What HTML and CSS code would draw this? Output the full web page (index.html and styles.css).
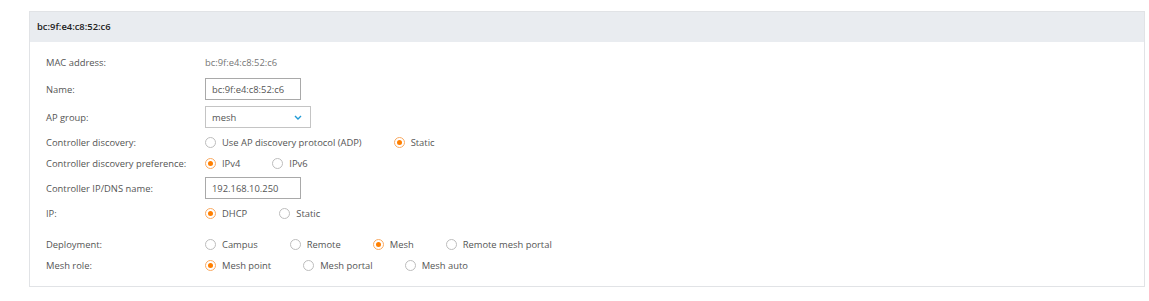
FILE: index.html
```html
<!DOCTYPE html>
<html lang="en">
<head>
  <meta charset="UTF-8" />
  <title>AP details</title>
  <link rel="stylesheet" href="styles.css">
</head>
<body>

<div class="ap-panel">
  <div class="ap-panel-header">bc:9f:e4:c8:52:c6</div>

  <div class="ap-panel-body">
    <div class="field-row">
      <div class="field-label">MAC address:</div>
      <div class="field-value static-value">bc:9f:e4:c8:52:c6</div>
    </div>

    <div class="field-row input-row first-input">
      <div class="field-label">Name:</div>
      <div class="field-value"><input class="text-input" type="text" value="bc:9f:e4:c8:52:c6" /></div>
    </div>

    <div class="field-row input-row tight">
      <div class="field-label">AP group:</div>
      <div class="field-value">
        <div class="select-box">
          <span>mesh</span>
          <svg class="chevron" width="8" height="5" viewBox="0 0 8 5"><path d="M1 1 L4 4 L7 1" fill="none" stroke="#1f9ad6" stroke-width="1.4"/></svg>
        </div>
      </div>
    </div>

    <div class="field-row">
      <div class="field-label">Controller discovery:</div>
      <div class="field-value radio-group">
        <label class="radio"><span class="radio-dot"></span>Use AP discovery protocol (ADP)</label>
        <label class="radio checked"><span class="radio-dot"></span>Static</label>
      </div>
    </div>

    <div class="field-row">
      <div class="field-label">Controller discovery preference:</div>
      <div class="field-value radio-group">
        <label class="radio checked"><span class="radio-dot"></span>IPv4</label>
        <label class="radio"><span class="radio-dot"></span>IPv6</label>
      </div>
    </div>

    <div class="field-row input-row">
      <div class="field-label">Controller IP/DNS name:</div>
      <div class="field-value"><input class="text-input" type="text" value="192.168.10.250" /></div>
    </div>

    <div class="field-row">
      <div class="field-label">IP:</div>
      <div class="field-value radio-group">
        <label class="radio checked"><span class="radio-dot"></span>DHCP</label>
        <label class="radio"><span class="radio-dot"></span>Static</label>
      </div>
    </div>

    <div class="field-row group-start">
      <div class="field-label">Deployment:</div>
      <div class="field-value radio-group">
        <label class="radio"><span class="radio-dot"></span>Campus</label>
        <label class="radio"><span class="radio-dot"></span>Remote</label>
        <label class="radio checked"><span class="radio-dot"></span>Mesh</label>
        <label class="radio"><span class="radio-dot"></span>Remote mesh portal</label>
      </div>
    </div>

    <div class="field-row">
      <div class="field-label">Mesh role:</div>
      <div class="field-value radio-group">
        <label class="radio checked"><span class="radio-dot"></span>Mesh point</label>
        <label class="radio"><span class="radio-dot"></span>Mesh portal</label>
        <label class="radio"><span class="radio-dot"></span>Mesh auto</label>
      </div>
    </div>
  </div>
</div>

</body>
</html>
```

FILE: styles.css
```css
body {
  font-family: 'Open Sans', sans-serif;
  font-size: 9.4px;
  margin: 0;
  padding: 11px 4px 0 29px;
  background-color: #fff;
  color: #555;
}

.ap-panel {
  border: 1px solid #e1e3e6;
  background-color: #fff;
}

.ap-panel-header {
  height: 30px;
  line-height: 30px;
  padding-left: 7px;
  background-color: #e9ecf0;
  color: #222;
  font-weight: 600;
}

.ap-panel-body {
  padding: 10px 16px 11px 16px;
}

.field-row {
  display: flex;
  align-items: center;
  height: 20px;
  margin-top: 1px;
}

.field-row:first-child {
  margin-top: 0;
}

.input-row {
  height: 28px;
}

.first-input {
  margin-top: 3px;
}

.tight {
  margin-top: 0;
}

.group-start {
  margin-top: 11px;
}

.field-label {
  width: 159px;
  flex-shrink: 0;
}

.static-value {
  color: #777;
}

.text-input {
  box-sizing: border-box;
  width: 96px;
  height: 22px;
  margin: 0;
  padding: 0 6px;
  border: 1px solid #a9a9a9;
  font-family: inherit;
  font-size: 9.4px;
  color: #555;
  outline: none;
}

.select-box {
  box-sizing: border-box;
  width: 106px;
  height: 22px;
  padding: 0 8px 0 6px;
  border: 1px solid #c4c4c4;
  display: flex;
  align-items: center;
  justify-content: space-between;
  color: #555;
}

.radio-group {
  display: flex;
  align-items: center;
  gap: 32px;
}

.radio {
  display: flex;
  align-items: center;
  gap: 6px;
  cursor: pointer;
}

.radio-dot {
  box-sizing: border-box;
  width: 11px;
  height: 11px;
  border: 1px solid #bdbdbd;
  border-radius: 50%;
  background-color: #fff;
  position: relative;
}

.radio.checked .radio-dot {
  border-color: #f9a961;
}

.radio.checked .radio-dot::after {
  content: '';
  position: absolute;
  left: 2px;
  top: 2px;
  width: 5px;
  height: 5px;
  border-radius: 50%;
  background-color: #ff7f00;
}
```
